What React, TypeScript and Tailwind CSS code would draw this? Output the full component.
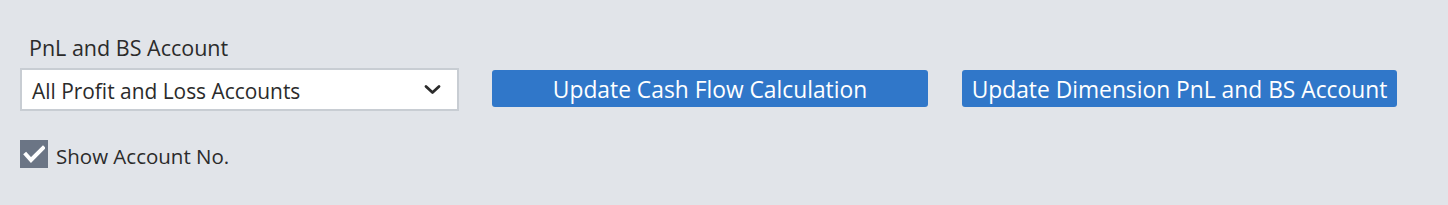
import React from "react";

export default function App() {
  return (
    <div className="w-[1448px] h-[205px] bg-[#e1e4e9] text-[#2b2b2b]" style={{ fontFamily: '"Open Sans", sans-serif' }}>
      <div className="pt-[34px] pl-[20px]">
        <div className="flex items-end">
          <div className="flex flex-col">
            <div className="pl-[9px] text-[21.5px] leading-[28px] mb-[6px]">PnL and BS Account</div>
            <div className="w-[439px] h-[43px] bg-white border-2 border-[#c8cdd3] flex items-center justify-between pl-[10px] pr-[16px]">
              <span className="text-[20.9px] leading-none pt-[3px]">All Profit and Loss Accounts</span>
              <svg width="17" height="11" viewBox="0 0 17 11" fill="none">
                <path d="M2 2.5l6.5 6 6.5-6" stroke="#2b2b2b" strokeWidth="2.8" strokeLinecap="round" strokeLinejoin="round" />
              </svg>
            </div>
          </div>
          <button className="ml-[33px] w-[436px] h-[37px] mb-[4px] bg-[#3077c9] text-white rounded-[3px] text-[22.8px] leading-none flex items-center justify-center pt-[4px]">
            Update Cash Flow Calculation
          </button>
          <button className="ml-[34px] w-[435px] h-[37px] mb-[4px] bg-[#3077c9] text-white rounded-[3px] text-[22.8px] leading-none flex items-center justify-center pt-[4px]">
            Update Dimension PnL and BS Account
          </button>
        </div>
        <div className="flex items-center mt-[29px] gap-[8px]">
          <div className="w-[28px] h-[28px] bg-[#6b7585] flex items-center justify-center">
            <svg width="22" height="18" viewBox="0 0 22 18" fill="none">
              <path d="M3 9.5l5 5.5L20 3" stroke="white" strokeWidth="4" strokeLinecap="square" strokeLinejoin="miter" />
            </svg>
          </div>
          <span className="text-[20.5px] leading-none pt-[4px]">Show Account No.</span>
        </div>
      </div>
    </div>
  );
}
